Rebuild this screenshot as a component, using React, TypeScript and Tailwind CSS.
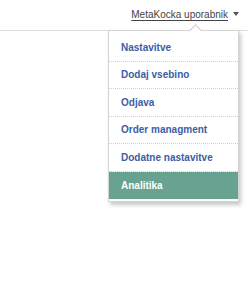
const items = [
  "Nastavitve",
  "Dodaj vsebino",
  "Odjava",
  "Order managment",
  "Dodatne nastavitve",
];

export default function App() {
  return (
    <div className="relative h-[300px] w-[248px] bg-white font-['Liberation_Sans',Arial,sans-serif]">
      <div className="flex h-[31px] items-start justify-end border-b border-[#dedede] pr-[9px] pt-[9px]">
        <a className="text-[10px] leading-[12px] text-[#444] underline underline-offset-[2px]">
          MetaKocka uporabnik
        </a>
        <span className="ml-[5px] mt-[3px] h-0 w-0 border-x-[3px] border-t-[4px] border-x-transparent border-t-[#555]" />
      </div>

      <div className="absolute left-[108px] top-[30px] w-[131px] border border-[#d4d4d4] bg-white pb-[2px] pt-[3px] shadow-[2px_3px_4px_rgba(0,0,0,0.22)]">
        <div className="absolute -top-[5px] left-[82px] z-10 h-[9px] w-[9px] rotate-45 border-l border-t border-[#c8c8c8] bg-white" />
        {items.map((label) => (
          <div
            key={label}
            className="relative flex h-[27.5px] items-center border-b border-dotted border-[#cfcfcf] pl-[12px] text-[10px] font-bold text-[#3c5da6]"
          >
            {label}
          </div>
        ))}
        <div className="flex h-[27.5px] items-center bg-[#68a290] pl-[12px] text-[10px] font-bold text-white">
          Analitika
        </div>
      </div>
    </div>
  );
}
